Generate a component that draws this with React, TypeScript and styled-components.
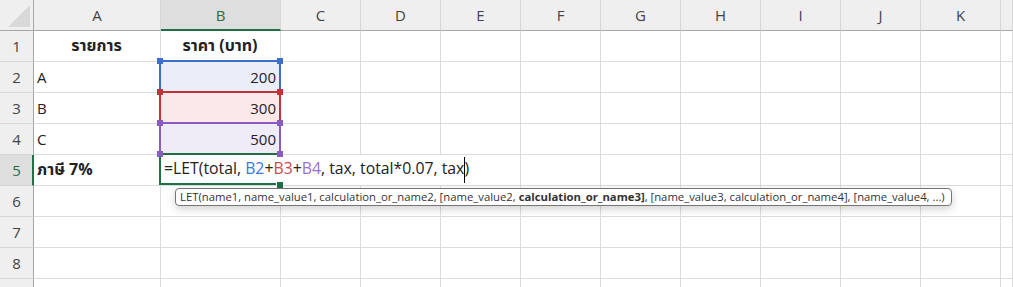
import React from 'react';
import styled, { createGlobalStyle, css } from 'styled-components';

const GlobalStyle = createGlobalStyle`
  html, body { margin: 0; padding: 0; background: #ffffff; overflow: hidden; }
  body { font-family: "Open Sans", "Noto Sans", "Noto Sans Thai", "Loma", "Garuda", sans-serif; }
`;

const GREEN = '#1e7145';

const Sheet = styled.div`
  width: 1013px;
  height: 287px;
  overflow: hidden;
`;

const Grid = styled.div`
  display: grid;
  grid-template-columns: 34px 127px 120px repeat(9, 80px) 1fr;
  grid-auto-rows: 31px;
  font-size: 15px;
  color: #222;
`;

const Corner = styled.div`
  position: relative;
  background: #efefef;
  border-right: 1px solid #a6a6a6;
  border-bottom: 1px solid #a6a6a6;
  box-sizing: border-box;
  &::after {
    content: '';
    position: absolute;
    right: 3px;
    bottom: 3px;
    width: 0;
    height: 0;
    border-left: 22px solid transparent;
    border-bottom: 22px solid #d9d9d9;
  }
`;

const ColHead = styled.div<{ $sel?: boolean }>`
  box-sizing: border-box;
  display: flex;
  align-items: center;
  justify-content: center;
  background: ${p => (p.$sel ? '#dedede' : '#efefef')};
  border-right: 1px solid #d6d6d6;
  border-bottom: ${p => (p.$sel ? `2px solid ${GREEN}` : '1px solid #a6a6a6')};
  color: ${p => (p.$sel ? GREEN : '#444')};
  padding-top: ${p => (p.$sel ? '1px' : '0')};
  font-size: 15px;
`;

const RowHead = styled.div<{ $sel?: boolean }>`
  box-sizing: border-box;
  display: flex;
  align-items: center;
  justify-content: center;
  background: ${p => (p.$sel ? '#dedede' : '#efefef')};
  border-bottom: 1px solid #d6d6d6;
  border-right: ${p => (p.$sel ? `2px solid ${GREEN}` : '1px solid #a6a6a6')};
  color: ${p => (p.$sel ? GREEN : '#444')};
  padding-left: ${p => (p.$sel ? '1px' : '0')};
  font-size: 15px;
`;

type Align = 'left' | 'center' | 'right';

const Cell = styled.div<{ $align?: Align; $bold?: boolean; $fill?: string; $range?: string; $active?: boolean }>`
  position: relative;
  box-sizing: border-box;
  display: flex;
  align-items: center;
  justify-content: ${p => (p.$align === 'center' ? 'center' : p.$align === 'right' ? 'flex-end' : 'flex-start')};
  padding: ${p => (p.$active ? '0' : '0 4px 0 3px')};
  border-right: 1px solid #dcdcdc;
  border-bottom: 1px solid #dcdcdc;
  background: ${p => p.$fill || '#ffffff'};
  font-weight: ${p => (p.$bold ? 700 : 400)};
  font-size: ${p => (p.$bold ? '16px' : '15px')};
  white-space: nowrap;
  color: #222;

  ${p =>
    p.$range &&
    css`
      &::after {
        content: '';
        position: absolute;
        left: -2px;
        top: -2px;
        right: -1px;
        bottom: -1px;
        border: 2px solid ${p.$range};
        z-index: 3;
      }
      &::before {
        content: '';
        position: absolute;
        left: -4px;
        top: -4px;
        width: 6px;
        height: 6px;
        background: ${p.$range};
        box-shadow: 120px 0 0 ${p.$range}, 0 31px 0 ${p.$range}, 120px 31px 0 ${p.$range};
        z-index: 4;
      }
    `}

  ${p =>
    p.$active &&
    css`
      &::after {
        content: '';
        position: absolute;
        left: -2px;
        top: -2px;
        right: 0;
        bottom: 0;
        border-top: 2px solid ${GREEN};
        border-left: 2px solid ${GREEN};
        border-bottom: 2px solid ${GREEN};
        z-index: 3;
      }
      &::before {
        content: '';
        position: absolute;
        left: 115px;
        top: 26px;
        width: 6px;
        height: 6px;
        background: ${GREEN};
        border: 1px solid #ffffff;
        z-index: 4;
      }
    `}
`;

const Editor = styled.div`
  position: relative;
  z-index: 2;
  align-self: stretch;
  display: flex;
  align-items: center;
  padding: 0 12px 0 3px;
  background: #ffffff;
  font-size: 15.8px;
  color: #222;
  white-space: nowrap;
`;

const EditText = styled.span`
  white-space: pre;
`;

const Ref = styled.span<{ $color: string }>`
  color: ${p => p.$color};
`;

const Caret = styled.span`
  display: inline-block;
  width: 1px;
  height: 26px;
  background: #000;
  vertical-align: middle;
  margin-right: -1px;
`;

const Tip = styled.div`
  position: absolute;
  left: 14px;
  top: 33px;
  z-index: 5;
  width: 777px;
  height: 18px;
  box-sizing: border-box;
  background: #fff;
  border: 1px solid #767676;
  border-radius: 4px;
  box-shadow: 0 3px 8px rgba(0, 0, 0, 0.18);
  font-size: 11.3px;
  font-weight: 400;
  line-height: 16px;
  color: #333;
  padding: 0 4px;
  white-space: nowrap;
  overflow: hidden;
`;

const cols = ['A', 'B', 'C', 'D', 'E', 'F', 'G', 'H', 'I', 'J', 'K', ''];

type CellDef = { text?: string; align?: Align; bold?: boolean; fill?: string; range?: string };

const rows: Record<number, Record<number, CellDef>> = {
  1: { 0: { text: 'รายการ', align: 'center', bold: true }, 1: { text: 'ราคา (บาท)', align: 'center', bold: true } },
  2: { 0: { text: 'A' }, 1: { text: '200', align: 'right', fill: '#e9eef8', range: '#3b6fcb' } },
  3: { 0: { text: 'B' }, 1: { text: '300', align: 'right', fill: '#fbe9e9', range: '#c3343a' } },
  4: { 0: { text: 'C' }, 1: { text: '500', align: 'right', fill: '#efebf7', range: '#8a5cc0' } },
  5: { 0: { text: 'ภาษี 7%', bold: true } },
};

function FormulaEditor() {
  return (
    <>
      <Editor>
        <EditText>
          {'=LET(total, '}
          <Ref $color="#3b78d8">B2</Ref>+<Ref $color="#d2474d">B3</Ref>+<Ref $color="#9870d0">B4</Ref>
          {', tax, total*0.07, tax'}
          <Caret />)
        </EditText>
      </Editor>
      <Tip>
        LET(name1, name_value1, calculation_or_name2, [name_value2, <b>calculation_or_name3]</b>, [name_value3,
        calculation_or_name4], [name_value4, ...)
      </Tip>
    </>
  );
}

export default function App() {
  return (
    <>
      <GlobalStyle />
      <Sheet>
        <Grid>
          <Corner />
          {cols.map((c, i) => (
            <ColHead key={'h' + i} $sel={c === 'B'}>
              {c}
            </ColHead>
          ))}
          {Array.from({ length: 9 }, (_, r) => r + 1).map(r => (
            <React.Fragment key={'r' + r}>
              <RowHead $sel={r === 5}>{r < 9 ? r : ''}</RowHead>
              {cols.map((_, ci) => {
                const d = rows[r]?.[ci];
                const active = r === 5 && ci === 1;
                return (
                  <Cell
                    key={ci}
                    $align={d?.align}
                    $bold={d?.bold}
                    $fill={d?.fill}
                    $range={d?.range}
                    $active={active}
                  >
                    {active ? <FormulaEditor /> : d?.text}
                  </Cell>
                );
              })}
            </React.Fragment>
          ))}
        </Grid>
      </Sheet>
    </>
  );
}
